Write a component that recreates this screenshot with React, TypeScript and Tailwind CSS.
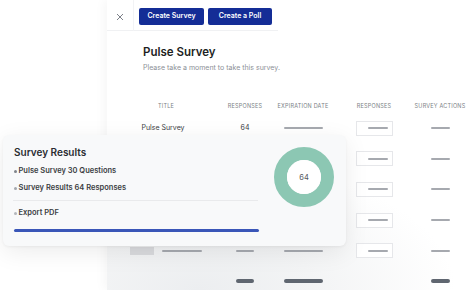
import React from "react";

const font = { fontFamily: "Inter, 'Liberation Sans', sans-serif" };

function Bar({ w, dark = false }: { w: number; dark?: boolean }) {
  return (
    <div
      className={dark ? "h-[4px] rounded-full bg-[#5f6670]" : "h-[2px] rounded-full bg-[#a6a9af]"}
      style={{ width: w }}
    />
  );
}

function RespBox() {
  return (
    <div className="flex h-[15px] w-[37px] items-center justify-end border border-[#e6e7ea] bg-white pr-[4px]">
      <Bar w={20} />
    </div>
  );
}

function Row({ children }: { children: React.ReactNode }) {
  return <div className="flex h-[30.6px] items-center">{children}</div>;
}

function Cell({ w, children }: { w: number; children?: React.ReactNode }) {
  return (
    <div className="flex shrink-0 items-center justify-center whitespace-nowrap" style={{ width: w }}>
      {children}
    </div>
  );
}

const W = [88, 70, 46, 96, 36];

function PlainRow({ square = false }: { square?: boolean }) {
  return (
    <Row>
      <Cell w={W[0]}>
        <div className="flex items-center gap-[8px]">
          {square ? <div className="h-[8px] w-[24px] bg-[#d9dadd]" /> : <div className="h-[8px] w-[24px]" />}
          <Bar w={40} />
        </div>
      </Cell>
      <Cell w={W[1]}>
        <Bar w={18} />
      </Cell>
      <Cell w={W[2]}>
        <Bar w={39} />
      </Cell>
      <Cell w={W[3]}>
        <RespBox />
      </Cell>
      <Cell w={W[4]}>
        <Bar w={19} />
      </Cell>
    </Row>
  );
}

export default function App() {
  return (
    <div className="relative h-[290px] w-[474px] overflow-hidden bg-white" style={font}>
      <div className="ml-[107px] h-[290px] bg-[radial-gradient(ellipse_70%_45%_at_25%_100%,#eceef0_0%,#f3f4f5_45%,#ffffff_100%)] shadow-[-3px_0_10px_rgba(0,0,0,0.04)]">
        {/* top bar */}
        <div className="flex h-[31px] w-[171px] items-start border-b border-[#f0f1f3] bg-white">
          <div className="flex h-[31px] w-[26px] items-center justify-center pt-[2px] text-[#7d8189]">
            <svg width="8" height="8" viewBox="0 0 8 8">
              <path d="M1 1L7 7M7 1L1 7" stroke="currentColor" strokeWidth="1" />
            </svg>
          </div>
          <div className="h-[31px] w-px bg-[#f2f3f5]" />
          <div className="ml-[5px] mt-[8px] flex gap-[4px]">
            <div className="flex h-[17px] w-[65px] items-center justify-center rounded-[2px] bg-[#142d96] text-[7px] font-semibold text-white">
              Create Survey
            </div>
            <div className="flex h-[17px] w-[64px] items-center justify-center rounded-[2px] bg-[#142d96] text-[7px] font-semibold text-white">
              Create a Poll
            </div>
          </div>
        </div>

        {/* heading */}
        <div className="pl-[36px] pt-[14px]">
          <div className="text-[11.5px] font-semibold leading-[14px] text-[#1d1f23]">Pulse Survey</div>
          <div className="mt-[4px] text-[7px] leading-[10px] text-[#8c9097]">Please take a moment to take this survey.</div>
        </div>

        {/* table */}
        <div className="mt-[26px] pl-[15px]">
          <div className="flex h-[14px] items-center text-[5.5px] uppercase tracking-[0.2px] text-[#7b7f86]">
            <Cell w={W[0]}>Title</Cell>
            <Cell w={W[1]}>Responses</Cell>
            <Cell w={W[2]}>Expiration Date</Cell>
            <Cell w={W[3]}>Responses</Cell>
            <Cell w={W[4]}>Survey Actions</Cell>
          </div>
          <Row>
            <Cell w={W[0]}>
              <span className="mr-[6px] text-[7px] text-[#3a3d42]">Pulse Survey</span>
            </Cell>
            <Cell w={W[1]}>
              <span className="text-[7px] text-[#3a3d42]">64</span>
            </Cell>
            <Cell w={W[2]}>
              <Bar w={39} />
            </Cell>
            <Cell w={W[3]}>
              <RespBox />
            </Cell>
            <Cell w={W[4]}>
              <Bar w={19} />
            </Cell>
          </Row>
          <PlainRow />
          <PlainRow />
          <PlainRow />
          <PlainRow square />
          <Row>
            <Cell w={W[0]} />
            <Cell w={W[1]}>
              <Bar w={18} dark />
            </Cell>
            <Cell w={W[2]}>
              <Bar w={39} dark />
            </Cell>
            <Cell w={W[3]} />
            <Cell w={W[4]}>
              <Bar w={19} dark />
            </Cell>
          </Row>
        </div>
      </div>

      {/* overlay card */}
      <div className="absolute left-[3px] top-[135px] flex h-[111px] w-[343px] rounded-[6px] bg-[#f8f9fa] shadow-[0_6px_24px_rgba(0,0,0,0.08),0_1px_3px_rgba(0,0,0,0.05)]">
        <div className="w-[260px] pl-[11px] pt-[11px]">
          <div className="text-[10px] font-semibold leading-[12px] text-[#2a2d32]">Survey Results</div>
          <div className="mt-[8px] flex h-[10px] items-center gap-[1.5px] text-[7.5px] font-semibold text-[#3a3d42]">
            <span className="h-[3px] w-[3px] rounded-full bg-[#7f848b]" />
            Pulse Survey 30 Questions
          </div>
          <div className="mt-[7px] flex h-[10px] items-center gap-[1.5px] text-[7.5px] font-semibold text-[#3a3d42]">
            <span className="h-[3px] w-[3px] rounded-full bg-[#a3a7ad]" />
            Survey Results 64 Responses
          </div>
          <div className="mt-[7px] ml-[-1px] h-px w-[245px] bg-[#e9eaec]" />
          <div className="mt-[7px] flex h-[10px] items-center gap-[1.5px] text-[7.5px] font-semibold text-[#3a3d42]">
            <span className="h-[3px] w-[3px] rounded-full bg-[#b3b6bb]" />
            Export PDF
          </div>
          <div className="mt-[11px] h-[3px] w-[245px] rounded-full bg-[#3a56b8]" />
        </div>
        <div className="ml-[11px] mt-[12px]">
          <svg width="60" height="60" viewBox="0 0 60 60">
            <circle cx="30" cy="30" r="23.5" fill="none" stroke="#8cc7b3" strokeWidth="13" />
            <circle cx="30" cy="30" r="17" fill="#ffffff" />
            <text x="30" y="32.5" textAnchor="middle" fontSize="7.5" fill="#55585e" fontFamily="Inter, sans-serif">
              64
            </text>
          </svg>
        </div>
      </div>
    </div>
  );
}
